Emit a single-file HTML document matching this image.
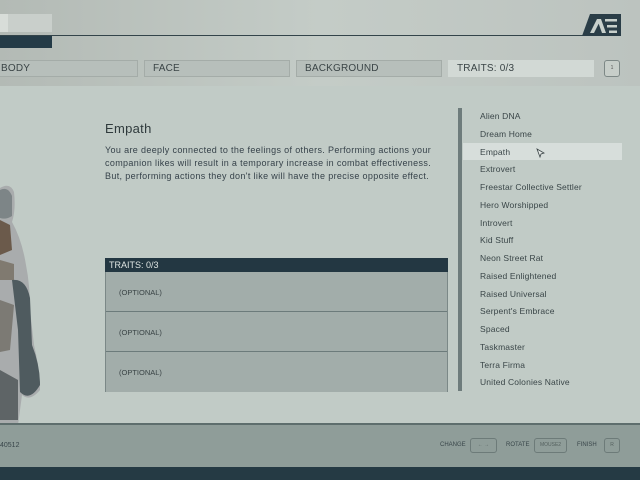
<!DOCTYPE html>
<html><head><style>
*{margin:0;padding:0;box-sizing:border-box}
body{width:640px;height:480px;overflow:hidden;position:relative;font-family:"Liberation Sans",sans-serif;background:#c1cbc6;color:#2e3a3c}
.abs{position:absolute}
.top{left:0;top:0;width:640px;height:86px;background:linear-gradient(90deg,#b3bab5 0%,#c4ccc7 50%,#bcc3bf 100%)}
.tab{top:60px;height:17px;border:1px solid #a4aca8;background:#b7bfbb;font-size:10px;line-height:15px;padding-left:8px;color:#3a4446;letter-spacing:0.2px}
.item{left:480px;font-size:8.5px;color:#3a4648;letter-spacing:0.15px}
.opt{left:106px;width:341px;height:40px;background:#a2adaa;border-bottom:1px solid #6c7b7b;font-size:7.5px;color:#3a4446;padding:16px 0 0 13px}
.key{border:1px solid #6d7b79;border-radius:3px;height:15px;top:438px;font-size:5px;color:#55615f;text-align:center;line-height:13px}
.lab{top:442px;font-size:6px;color:#39464a}
</style></head><body>
<div class="abs top"></div>
<div class="abs" style="left:0;top:14px;width:8px;height:18px;background:#d8ddd9"></div>
<div class="abs" style="left:8px;top:14px;width:44px;height:18px;background:#c9cfcb"></div>
<div class="abs" style="left:0;top:35px;width:590px;height:1px;background:#33444a"></div>
<div class="abs" style="left:0;top:36px;width:52px;height:12px;background:#243b47"></div>
<svg class="abs" style="left:582px;top:13px" width="40" height="24" viewBox="0 0 40 24">
<path d="M8 1 L39 1 L39 23 L0 23 Z" fill="#2a3d47"/>
<path d="M8 20 L15 6 L19 6 L12 20 Z M15 6 L19 6 L24 20 L20 20 Z" fill="#c8d0cc"/>
<rect x="23" y="6" width="12" height="2.5" fill="#c8d0cc"/>
<rect x="25" y="12" width="10" height="2.5" fill="#c8d0cc"/>
<rect x="27" y="17.5" width="8" height="2.5" fill="#c8d0cc"/>
</svg>
<div class="abs tab" style="left:-8px;width:146px">BODY</div>
<div class="abs tab" style="left:144px;width:146px">FACE</div>
<div class="abs tab" style="left:296px;width:146px">BACKGROUND</div>
<div class="abs tab" style="left:448px;width:146px;background:#d2d9d5;border-color:#d2d9d5">TRAITS: 0/3</div>
<div class="abs" style="left:604px;top:60px;width:16px;height:17px;border:1px solid #7d8886;border-radius:3px;background:#c7cec9;font-size:5px;text-align:center;line-height:15px;color:#555">1</div>
<!-- figure -->
<svg class="abs" style="left:0;top:180px" width="45" height="245" viewBox="0 0 45 245">
<path d="M0 8 Q10 2 14 12 Q16 30 12 42 Q22 60 26 85 Q30 105 30 130 L34 165 Q40 190 40 210 Q30 222 22 215 L18 245 L0 245 Z" fill="#a9acad"/>
<path d="M0 10 Q8 6 12 16 L12 36 Q6 40 0 38 Z" fill="#7d8587"/>
<path d="M0 40 L10 45 L12 70 L0 75 Z" fill="#6b5a4b"/>
<path d="M0 80 L14 84 L14 100 L0 100 Z" fill="#807a70"/>
<path d="M12 100 Q26 98 30 118 L32 165 Q40 185 40 205 Q30 222 20 212 L18 150 Z" fill="#4f5b5f"/>
<path d="M0 120 L14 125 L10 170 L0 172 Z" fill="#7c7a74"/>
<path d="M0 190 L18 200 L18 240 L0 240 Z" fill="#5e6466"/>
</svg>
<div class="abs" style="left:105px;top:121px;font-size:13px;color:#2f3a3c;letter-spacing:0.3px">Empath</div>
<div class="abs" style="left:105px;top:144px;width:345px;font-size:9px;line-height:13px;color:#36424a;letter-spacing:0.35px">You are deeply connected to the feelings of others. Performing actions your companion likes will result in a temporary increase in combat effectiveness. But, performing actions they don't like will have the precise opposite effect.</div>
<div class="abs" style="left:105px;top:258px;width:343px;height:134px;border:1px solid #7b8887;background:#a2adaa"></div>
<div class="abs" style="left:105px;top:258px;width:343px;height:14px;background:#233742;color:#dfe5e3;font-size:9px;line-height:14px;padding-left:4px">TRAITS: 0/3</div>
<div class="abs opt" style="top:272px">(OPTIONAL)</div>
<div class="abs opt" style="top:312px">(OPTIONAL)</div>
<div class="abs opt" style="top:352px;border-bottom:none">(OPTIONAL)</div>
<div class="abs" style="left:458px;top:108px;width:4px;height:283px;background:#6e7c7c"></div>
<div class="abs" style="left:463px;top:143px;width:159px;height:17px;background:#d7dedb"></div>
<div class="abs item" style="top:111px">Alien DNA</div>
<div class="abs item" style="top:129px">Dream Home</div>
<div class="abs item" style="top:147px">Empath</div>
<div class="abs item" style="top:164px">Extrovert</div>
<div class="abs item" style="top:182px">Freestar Collective Settler</div>
<div class="abs item" style="top:200px">Hero Worshipped</div>
<div class="abs item" style="top:218px">Introvert</div>
<div class="abs item" style="top:235px">Kid Stuff</div>
<div class="abs item" style="top:253px">Neon Street Rat</div>
<div class="abs item" style="top:271px">Raised Enlightened</div>
<div class="abs item" style="top:289px">Raised Universal</div>
<div class="abs item" style="top:306px">Serpent's Embrace</div>
<div class="abs item" style="top:324px">Spaced</div>
<div class="abs item" style="top:342px">Taskmaster</div>
<div class="abs item" style="top:360px">Terra Firma</div>
<div class="abs item" style="top:377px">United Colonies Native</div>
<svg class="abs" style="left:536px;top:148px" width="10" height="11" viewBox="0 0 10 11"><path d="M1 1 L8 5 L5 6 L4 9 Z" fill="#e8ecea" stroke="#3a4446" stroke-width="0.8"/></svg>
<!-- footer -->
<div class="abs" style="left:0;top:423px;width:640px;height:2px;background:#5e6e6d"></div>
<div class="abs" style="left:0;top:425px;width:640px;height:43px;background:#8f9d99"></div>
<div class="abs" style="left:0;top:467px;width:640px;height:13px;background:#253a44"></div>
<div class="abs" style="left:0;top:442px;font-size:7px;color:#39464a">40512</div>
<div class="abs lab" style="left:440px">CHANGE</div>
<div class="abs key" style="left:470px;width:27px">← →</div>
<div class="abs lab" style="left:506px">ROTATE</div>
<div class="abs key" style="left:534px;width:33px">MOUSE2</div>
<div class="abs lab" style="left:577px">FINISH</div>
<div class="abs key" style="left:604px;width:16px">R</div>
</body></html>
